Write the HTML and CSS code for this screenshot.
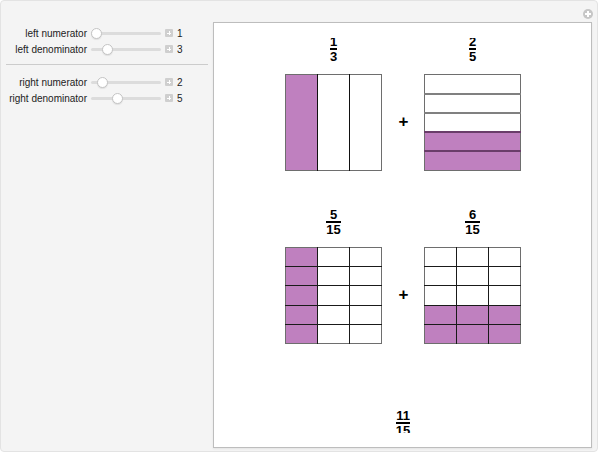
FILE: index.html
```html
<!DOCTYPE html>
<html>
<head>
<meta charset="utf-8">
<link rel="stylesheet" href="styles.css">
</head>
<body>
<div class="app">
  <aside class="controls">
    <div class="ctl">
      <span class="lbl">left numerator</span>
      <span class="slider"><span class="track"></span><span class="thumb" style="left:0px"></span></span>
      <span class="pm"></span>
      <span class="val">1</span>
    </div>
    <div class="ctl">
      <span class="lbl">left denominator</span>
      <span class="slider"><span class="track"></span><span class="thumb" style="left:11px"></span></span>
      <span class="pm"></span>
      <span class="val">3</span>
    </div>
    <hr class="sep">
    <div class="ctl">
      <span class="lbl">right numerator</span>
      <span class="slider"><span class="track"></span><span class="thumb" style="left:6px"></span></span>
      <span class="pm"></span>
      <span class="val">2</span>
    </div>
    <div class="ctl">
      <span class="lbl">right denominator</span>
      <span class="slider"><span class="track"></span><span class="thumb" style="left:21px"></span></span>
      <span class="pm"></span>
      <span class="val">5</span>
    </div>
  </aside>

  <main class="panel">
    <div class="clip">
      <div class="canvas">
        <div class="pair">
          <div class="frac lf"><span class="num">1</span><span class="bar"></span><span class="den">3</span></div>
          <div class="frac rf"><span class="num">2</span><span class="bar"></span><span class="den">5</span></div>
          <svg class="box lb" width="97" height="97" viewBox="0 0 97 97">
            <rect x="0" y="0" width="32" height="97" fill="#bf80bf"/>
            <rect x="0.5" y="0.5" width="96" height="96" fill="none" stroke="#6e6e6e"/>
            <line x1="32.5" y1="0" x2="32.5" y2="97" stroke="#111"/>
            <line x1="64.5" y1="0" x2="64.5" y2="97" stroke="#111"/>
          </svg>
          <div class="op">+</div>
          <svg class="box rb" width="97" height="97" viewBox="0 0 97 97">
            <rect x="0" y="58" width="97" height="39" fill="#bf80bf"/>
            <rect x="0.5" y="0.5" width="96" height="96" fill="none" stroke="#6e6e6e"/>
            <rect x="0" y="19" width="97" height="2" fill="#808080"/>
            <rect x="0" y="38" width="97" height="2" fill="#808080"/>
            <rect x="0" y="57" width="97" height="2" fill="#6a3d6a"/>
            <rect x="0" y="76" width="97" height="2" fill="#6a3d6a"/>
          </svg>
        </div>

        <div class="pair second">
          <div class="frac lf"><span class="num">5</span><span class="bar"></span><span class="den">15</span></div>
          <div class="frac rf"><span class="num">6</span><span class="bar"></span><span class="den">15</span></div>
          <svg class="box lb" width="97" height="97" viewBox="0 0 97 97">
            <rect x="0" y="0" width="32" height="97" fill="#bf80bf"/>
            <rect x="0.5" y="0.5" width="96" height="96" fill="none" stroke="#6e6e6e"/>
            <g stroke="#1a1a1a">
              <line x1="32.5" y1="0" x2="32.5" y2="97"/>
              <line x1="64.5" y1="0" x2="64.5" y2="97"/>
              <line x1="0" y1="19.5" x2="97" y2="19.5"/>
              <line x1="0" y1="38.5" x2="97" y2="38.5"/>
              <line x1="0" y1="58.5" x2="97" y2="58.5"/>
              <line x1="0" y1="77.5" x2="97" y2="77.5"/>
            </g>
          </svg>
          <div class="op">+</div>
          <svg class="box rb" width="97" height="97" viewBox="0 0 97 97">
            <rect x="0" y="58" width="97" height="39" fill="#bf80bf"/>
            <rect x="0.5" y="0.5" width="96" height="96" fill="none" stroke="#6e6e6e"/>
            <g stroke="#1a1a1a">
              <line x1="32.5" y1="0" x2="32.5" y2="97"/>
              <line x1="64.5" y1="0" x2="64.5" y2="97"/>
              <line x1="0" y1="19.5" x2="97" y2="19.5"/>
              <line x1="0" y1="38.5" x2="97" y2="38.5"/>
              <line x1="0" y1="58.5" x2="97" y2="58.5"/>
              <line x1="0" y1="77.5" x2="97" y2="77.5"/>
            </g>
          </svg>
        </div>

        <div class="result">
          <div class="frac"><span class="num">11</span><span class="bar"></span><span class="den">15</span></div>
        </div>
      </div>
    </div>
  </main>

  <span class="corner-btn"></span>
</div>
</body>
</html>
```

FILE: styles.css
```css
* { box-sizing: border-box; }

html, body {
  margin: 0;
  padding: 0;
  background: #ffffff;
}

.app {
  position: relative;
  width: 598px;
  height: 452px;
  background: #f4f4f4;
  border: 1px solid #e3e3e3;
  border-radius: 4px;
  display: flex;
  font-family: "Liberation Sans", Arial, sans-serif;
  color: #222;
}

/* ---------- controls ---------- */
.controls {
  width: 212px;
  padding: 24px 5px 0 5px;
  flex: none;
}

.ctl {
  display: grid;
  grid-template-columns: 81px 70px 8px auto;
  column-gap: 4px;
  align-items: center;
  height: 16px;
  font-size: 10px;
}

.lbl {
  text-align: right;
  white-space: nowrap;
  justify-self: end;
}

.slider {
  position: relative;
  height: 12px;
  display: block;
}

.track {
  position: absolute;
  left: 0;
  right: 0;
  top: 5px;
  height: 3px;
  border-radius: 2px;
  background: #dcdcdc;
}

.thumb {
  position: absolute;
  top: 1px;
  width: 11px;
  height: 11px;
  border-radius: 50%;
  background: #fff;
  border: 1px solid #c4c4c4;
  box-shadow: 0 1px 1px rgba(0,0,0,0.08);
}

.pm {
  position: relative;
  width: 8px;
  height: 8px;
  background: #cfcfcf;
  border-radius: 1px;
  display: block;
}
.pm::before, .pm::after {
  content: "";
  position: absolute;
  background: #fff;
}
.pm::before { left: 2px; right: 2px; top: 3.5px; height: 1px; }
.pm::after { top: 2px; bottom: 2px; left: 3.5px; width: 1px; }

.val {
  font-size: 10px;
}

.sep {
  border: 0;
  height: 1px;
  background: #cccccc;
  margin: 7px 0 9px 0;
}

/* ---------- panel ---------- */
.panel {
  margin-top: 21px;
  width: 379px;
  height: 426px;
  background: #fff;
  border: 1px solid #bdbdbd;
  box-shadow: 0 1px 2px rgba(0,0,0,0.07);
  padding-top: 15px;
  flex: none;
}

.clip {
  height: 395px;
  overflow: hidden;
}

.canvas {
  margin-top: -3px;
  display: flex;
  flex-direction: column;
  align-items: center;
}

.pair {
  display: grid;
  grid-template-columns: 97px 42px 97px;
  grid-template-rows: 28px 97px;
  row-gap: 11px;
  margin-left: 1px;
}
.pair .lf { grid-column: 1; grid-row: 1; }
.pair .rf { grid-column: 3; grid-row: 1; }
.pair .lb { grid-column: 1; grid-row: 2; }
.pair .rb { grid-column: 3; grid-row: 2; }
.pair .op { grid-column: 2; grid-row: 2; }

.pair.second { margin-top: 37px; }

.box { display: block; }

.op {
  align-self: center;
  justify-self: center;
  font-size: 17px;
  font-weight: bold;
  line-height: 17px;
  color: #000;
  margin-top: -2px;
  margin-left: 1px;
}

.frac {
  justify-self: center;
  display: inline-flex;
  flex-direction: column;
  align-items: center;
  font-size: 13px;
  font-weight: bold;
  color: #000;
}
.num, .den {
  line-height: 13px;
  height: 13px;
}
.bar {
  align-self: stretch;
  height: 2px;
  background: #000;
}

.result {
  margin-top: 62px;
  margin-left: 1px;
}

.corner-btn {
  position: absolute;
  top: 8px;
  right: 4px;
  width: 10px;
  height: 10px;
  border-radius: 50%;
  background: #c6c6c6;
}
.corner-btn::before, .corner-btn::after {
  content: "";
  position: absolute;
  background: #fff;
}
.corner-btn::before { left: 2px; right: 2px; top: 4px; height: 2px; }
.corner-btn::after { top: 2px; bottom: 2px; left: 4px; width: 2px; }
```
